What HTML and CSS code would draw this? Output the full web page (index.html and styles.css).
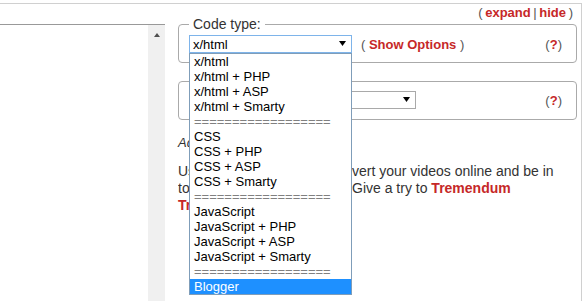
FILE: index.html
```html
<!DOCTYPE html>
<html>
<head>
<meta charset="utf-8">
<link rel="stylesheet" href="styles.css">
</head>
<body>
<div class="page">
  <div class="left">
    <div class="textarea">
      <div class="ta-body"></div>
      <div class="scrollbar"><span class="sb-up"></span></div>
    </div>
  </div>
  <div class="right">
    <div class="toolbar">( <a class="red">expand</a> | <a class="red">hide</a> )</div>
    <fieldset class="box first">
      <legend>Code type:</legend>
      <div class="row">
        <div class="select focused">
          <span class="val">x/html</span>
          <svg class="arrow" width="7" height="5" viewBox="0 0 7 5"><polygon points="0,0 7,0 3.5,5" fill="#000"/></svg>
          <ul class="listbox">
            <li>x/html</li>
            <li>x/html + PHP</li>
            <li>x/html + ASP</li>
            <li>x/html + Smarty</li>
            <li class="sep">==================</li>
            <li>CSS</li>
            <li>CSS + PHP</li>
            <li>CSS + ASP</li>
            <li>CSS + Smarty</li>
            <li class="sep">==================</li>
            <li>JavaScript</li>
            <li>JavaScript + PHP</li>
            <li>JavaScript + ASP</li>
            <li>JavaScript + Smarty</li>
            <li class="sep">==================</li>
            <li class="sel">Blogger</li>
          </ul>
        </div>
        <span class="opt">( <a class="red">Show Options</a> )</span>
        <span class="help">(<a class="red">?</a>)</span>
      </div>
    </fieldset>
    <fieldset class="box second">
      <div class="row">
        <div class="select wide">
          <span class="val"></span>
          <svg class="arrow" width="7" height="5" viewBox="0 0 7 5"><polygon points="0,0 7,0 3.5,5" fill="#000"/></svg>
        </div>
        <span class="help">(<a class="red">?</a>)</span>
      </div>
    </fieldset>
    <p class="note">Advanced</p>
    <p class="promo"><span class="lead">Use it to con</span>vert your videos online and be in<br><span class="lead">touch.</span>Give a try to <b>Tremendum</b><br><b>Transcoder</b></p>
  </div>
</div>
</body>
</html>
```

FILE: styles.css
```css
html, body {
  margin: 0;
  padding: 0;
  background: #fff;
  overflow: hidden;
}
body {
  font-family: "Liberation Sans", Arial, sans-serif;
  color: #333;
  width: 586px;
  height: 301px;
}
.page {
  margin-top: 3px;
  width: 581px;
  height: 297px;
  border-top: 1px solid #d0d0d0;
  border-right: 1px solid #d0d0d0;
  display: flex;
  overflow: hidden;
}
.left {
  flex: none;
  width: 165px;
  padding-top: 20px;
  display: flex;
  flex-direction: column;
}
.textarea {
  flex: 1;
  display: flex;
  border-top: 1px solid #999;
}
.ta-body {
  flex: 1;
}
.scrollbar {
  width: 17px;
  background: #f0f0f0;
  display: flex;
  justify-content: center;
  align-items: flex-start;
  padding-top: 8px;
  box-sizing: border-box;
}
.sb-up {
  width: 0;
  height: 0;
  border-left: 3.5px solid transparent;
  border-right: 3.5px solid transparent;
  border-bottom: 4px solid #505050;
}
.right {
  flex: none;
  width: 399px;
  margin-left: 13px;
}
.red {
  color: #c62828;
  font-weight: bold;
}
.toolbar {
  height: 12px;
  line-height: 18px;
  text-align: right;
  font-size: 13px;
  color: #555;
  padding-right: 4px;
  white-space: nowrap;
  word-spacing: -1px;
}
.box {
  margin: 0;
  padding: 3px 14px 9px 10px;
  border: 1px solid #aaa;
  border-radius: 4px;
  min-width: 0;
}
.box legend {
  padding: 0 4px;
  font-size: 14px;
  line-height: 16px;
  color: #333;
}
.box.second {
  margin-top: 18px;
  padding-top: 9px;
  padding-bottom: 10px;
}
.row {
  display: flex;
  align-items: center;
}
.select {
  position: relative;
  box-sizing: border-box;
  width: 163px;
  height: 18px;
  border: 1px solid #a9a9a9;
  display: flex;
  align-items: center;
  padding: 0 5px 0 3px;
  font-size: 13px;
  color: #000;
  background: #fff;
}
.select.focused {
  border-color: #7eb4ea;
}
.select.wide {
  width: 227px;
}
.select .val {
  flex: 1;
  line-height: 15px;
}
.arrow {
  display: block;
  margin-bottom: 2px;
}
.listbox {
  position: absolute;
  z-index: 10;
  left: -1px;
  top: calc(100% + 1px);
  width: 163px;
  box-sizing: border-box;
  margin: 0;
  padding: 0;
  list-style: none;
  border: 1px solid #7f9db9;
  background: #fff;
  font-size: 13px;
  color: #000;
}
.listbox li {
  height: 15px;
  line-height: 15px;
  padding-left: 4px;
  white-space: nowrap;
  overflow: hidden;
}
.listbox li.sep {
  color: #808080;
}
.listbox li.sel {
  background: #1e90ff;
  color: #fff;
}
.opt {
  margin-left: 9px;
  font-size: 13px;
  color: #555;
  white-space: nowrap;
}
.help {
  margin-left: auto;
  font-size: 13px;
  color: #555;
}
.note {
  margin: 15px 0 0;
  font-style: italic;
  font-size: 13px;
  line-height: 16px;
  color: #333;
}
.promo {
  margin: 12px 0 0;
  font-size: 14px;
  line-height: 17px;
  color: #333;
  white-space: nowrap;
}
.promo b {
  color: #c62828;
}
.lead {
  display: inline-block;
  width: 174px;
  overflow: hidden;
  white-space: nowrap;
  vertical-align: top;
}
```
